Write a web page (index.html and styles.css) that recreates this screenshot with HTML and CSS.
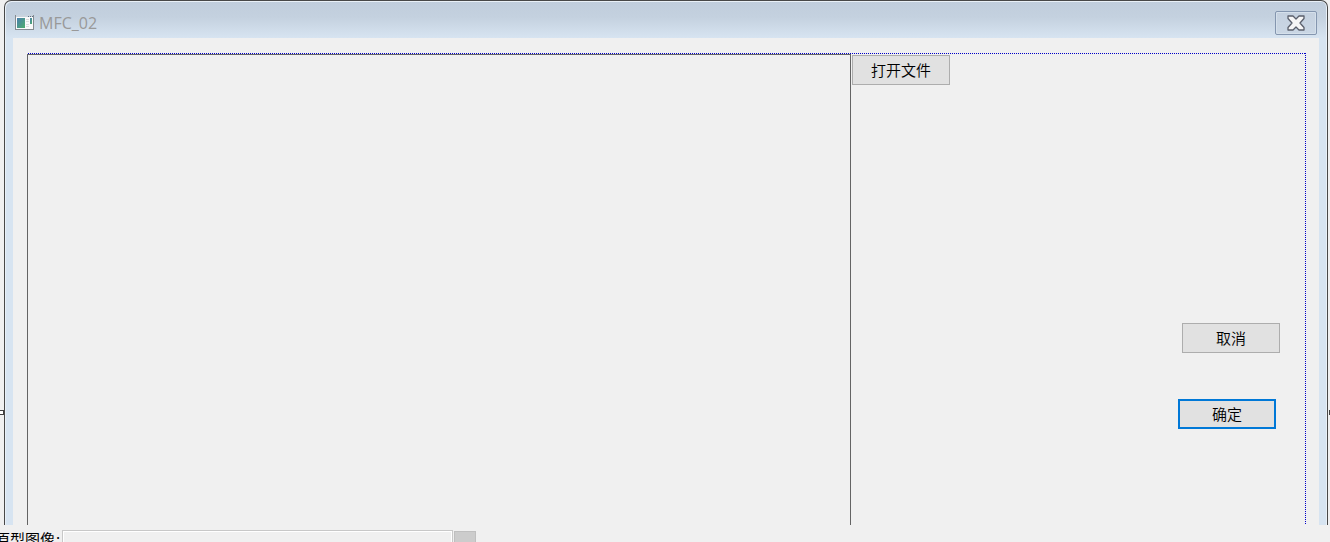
FILE: index.html
```
<!DOCTYPE html>
<html lang="zh-CN">
<head>
    <meta charset="UTF-8">
    <title>MFC_02</title>
    <link rel="stylesheet" href="styles.css">
</head>
<body>

    <div class="designer">
        <div class="window">
            <div class="titlebar">
                <svg class="app-icon" width="19" height="16" viewBox="0 0 19 16">
                    <defs>
                        <linearGradient id="screen" x1="0" y1="0" x2="1" y2="1">
                            <stop offset="0" stop-color="#4a7fae"/>
                            <stop offset="1" stop-color="#4fae6c"/>
                        </linearGradient>
                    </defs>
                    <rect x="0.5" y="1.5" width="18" height="14" fill="#fafafa" stroke="#858b90"/>
                    <rect x="1" y="1" width="17" height="2" fill="#c9d3dd"/>
                    <path d="M13 2.500h1M15 2.500h1M17 2.500h1" stroke="#5f6f82"/>
                    <rect x="2" y="4" width="8" height="10" fill="url(#screen)"/>
                    <path d="M11 5.500h3M11 7.500h3M11 10.500h3M11 12.500h3" stroke="#dcdcdc"/>
                    <rect x="15" y="4" width="2" height="6" fill="url(#screen)"/>
                </svg>
                <span class="title">MFC_02</span>
                <button class="close">
                    <svg width="18" height="16" viewBox="0 0 18 16">
                        <path d="M1 1h5l3 3 3-3h5v2.500l-4 4.500 4 4.500v2.500h-5l-3-3-3 3h-5v-2.500l4-4.500-4-4.500z" fill="#f6f6f6" stroke="#5a5f6b" stroke-width="1.300" stroke-linejoin="round"/>
                    </svg>
                </button>
            </div>
            <div class="client">
                <div class="guide">
                    <div class="picture"></div>
                    <button class="btn">打开文件</button>
                    <div class="actions">
                        <button class="btn">取消</button>
                        <button class="btn default">确定</button>
                    </div>
                </div>
            </div>
        </div>
        <span class="handle left"></span>
        <span class="handle right"></span>
    </div>

    <div class="prototype">
        <label>原型图像<span class="colon">:</span></label>
        <div class="path"></div>
        <div class="browse"></div>
    </div>

</body>
</html>
```

FILE: styles.css
```
* {
    box-sizing: border-box;
}
body {
    margin: 0;
    height: 542px;
    overflow: hidden;
    background: #f0f0f0;
    font-family: "Liberation Sans", "Noto Sans CJK SC", sans-serif;
    color: #000;
}
.designer {
    position: relative;
    height: 525px;
    padding: 0 2px 0 4px;
    overflow: hidden;
}
.window {
    height: 525px;
    border: 1px solid #484848;
    border-bottom: none;
    border-radius: 7px 7px 0 0;
    padding: 0 8px;
    background: linear-gradient(#c0cddc, #c4d1df 16px, #d7e4f1 37px);
    box-shadow: inset 1px 1px 0 #e9f0f7, inset -1px 0 0 #e9f0f7;
}
.titlebar {
    display: flex;
    align-items: flex-start;
    height: 37px;
    padding: 0 2px;
}
.app-icon {
    margin-top: 13px;
}
.title {
    margin: 12px auto 0 5px;
    font-family: "Open Sans", sans-serif;
    font-size: 16px;
    line-height: 20px;
    color: #999;
}
.close {
    display: flex;
    align-items: center;
    justify-content: center;
    width: 42px;
    height: 24px;
    margin-top: 10px;
    padding: 0;
    border: 1px solid #8496af;
    border-radius: 2px;
    background: linear-gradient(#c5d1df, #cad7e5);
    box-shadow: inset 0 0 0 1px #d5e0eb;
}
.client {
    height: 487px;
    padding: 15px 13px 0 14px;
    background: #f0f0f0;
}
.guide {
    display: flex;
    align-items: flex-start;
    height: 472px;
    padding-top: 1px;
    background:
        repeating-linear-gradient(90deg, transparent 0 1px, #0000c8 1px 2px) 0 0 / 100% 1px no-repeat,
        repeating-linear-gradient(#0000c8 0 1px, transparent 1px 2px) 100% 0 / 1px 100% no-repeat;
}
.picture {
    width: 824px;
    height: 471px;
    margin-right: 1px;
    border: 1px solid #646464;
    border-bottom: none;
}
.btn {
    width: 98px;
    height: 30px;
    margin-top: 1px;
    padding: 0;
    border: 1px solid #adadad;
    background: #e1e1e1;
    font-family: "Noto Sans CJK SC", sans-serif;
    font-size: 15px;
    font-weight: 350;
    line-height: 28px;
    color: #000;
}
.actions {
    display: flex;
    flex-direction: column;
    align-items: flex-end;
    margin: 268px 26px 0 auto;
}
.default {
    margin: 46px 4px 0 0;
    border: 2px solid #0078d7;
    line-height: 26px;
}
.handle {
    position: absolute;
    top: 410px;
    width: 5px;
    height: 5px;
    border: 1px solid #404040;
    background: #fff;
}
.handle.left {
    left: -1px;
}
.handle.right {
    right: -4px;
}
.prototype {
    display: flex;
    align-items: flex-start;
    height: 17px;
    overflow: hidden;
}
.prototype label {
    width: 67px;
    margin: 5px 0 0 -5px;
    font-family: "Noto Sans CJK SC", sans-serif;
    font-size: 15px;
    line-height: 18px;
    white-space: nowrap;
}
.colon {
    margin-left: 1px;
}
.path {
    width: 391px;
    height: 22px;
    margin-top: 5px;
    border: 1px solid #c8c8c8;
    box-shadow: inset 0 0 0 1px #fff;
}
.browse {
    width: 22px;
    height: 22px;
    margin: 6px 0 0 1px;
    border: 1px solid #bfbfbf;
    background: #ccc;
}
```
